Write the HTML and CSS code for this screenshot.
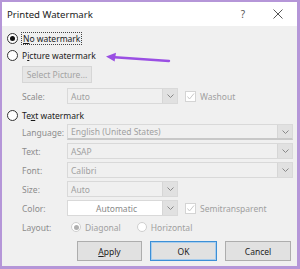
FILE: index.html
```html
<!DOCTYPE html>
<html>
<head>
<meta charset="utf-8">
<link rel="stylesheet" href="styles.css">
</head>
<body>
<div class="dialog">
  <div class="titlebar">
    <span class="title">Printed Watermark</span>
    <span class="help">?</span>
    <svg class="close" width="10" height="10" viewBox="0 0 10 10"><path d="M0.5 0.5 L9.5 9.5 M9.5 0.5 L0.5 9.5" stroke="#555" stroke-width="1"/></svg>
  </div>
  <div class="content">
    <div class="row opt first">
      <span class="radio checked"></span>
      <span class="focus">No watermark</span>
    </div>
    <div class="row opt">
      <span class="radio"></span>
      <span class="optlabel">P<u>i</u>cture watermark</span>
    </div>
    <div class="row btnrow">
      <span class="selbtn">Select Picture...</span>
    </div>
    <div class="row field scale">
      <span class="lbl">Scale:</span>
      <span class="combo short"><span class="val">Auto</span><span class="drop"><svg width="7" height="4" viewBox="0 0 7 4"><path d="M0.5 0.5 L3.5 3.5 L6.5 0.5" fill="none" stroke="#888" stroke-width="1"/></svg></span></span>
      <span class="check"><svg width="9" height="9" viewBox="0 0 9 9"><path d="M1.5 4.5 L3.5 7 L8 1.5" fill="none" stroke="#c8c8c8" stroke-width="1"/></svg></span>
      <span class="checklbl">Washout</span>
    </div>
    <div class="row opt textwm">
      <span class="radio"></span>
      <span class="optlabel">Te<u>x</u>t watermark</span>
    </div>
    <div class="row field lang">
      <span class="lbl">Language:</span>
      <span class="combo long shadow"><span class="val">English (United States)</span><span class="drop"><svg width="7" height="4" viewBox="0 0 7 4"><path d="M0.5 0.5 L3.5 3.5 L6.5 0.5" fill="none" stroke="#888" stroke-width="1"/></svg></span></span>
    </div>
    <div class="row field">
      <span class="lbl">Text:</span>
      <span class="combo long"><span class="val">ASAP</span><span class="drop"><svg width="7" height="4" viewBox="0 0 7 4"><path d="M0.5 0.5 L3.5 3.5 L6.5 0.5" fill="none" stroke="#888" stroke-width="1"/></svg></span></span>
    </div>
    <div class="row field">
      <span class="lbl">Font:</span>
      <span class="combo long"><span class="val">Calibri</span><span class="drop"><svg width="7" height="4" viewBox="0 0 7 4"><path d="M0.5 0.5 L3.5 3.5 L6.5 0.5" fill="none" stroke="#888" stroke-width="1"/></svg></span></span>
    </div>
    <div class="row field">
      <span class="lbl">Size:</span>
      <span class="combo short"><span class="val">Auto</span><span class="drop"><svg width="7" height="4" viewBox="0 0 7 4"><path d="M0.5 0.5 L3.5 3.5 L6.5 0.5" fill="none" stroke="#888" stroke-width="1"/></svg></span></span>
    </div>
    <div class="row field">
      <span class="lbl">Color:</span>
      <span class="combo short white"><span class="val center">Automatic</span><span class="drop"><svg width="7" height="4" viewBox="0 0 7 4"><path d="M0.5 0.5 L3.5 3.5 L6.5 0.5" fill="none" stroke="#888" stroke-width="1"/></svg></span></span>
      <span class="check"><svg width="9" height="9" viewBox="0 0 9 9"><path d="M1.5 4.5 L3.5 7 L8 1.5" fill="none" stroke="#c8c8c8" stroke-width="1"/></svg></span>
      <span class="checklbl">Semitransparent</span>
    </div>
    <div class="row field layout">
      <span class="lbl">Layout:</span>
      <span class="radio dis checked"></span>
      <span class="dislbl diag">Diagonal</span>
      <span class="radio dis"></span>
      <span class="dislbl">Horizontal</span>
    </div>
    <div class="buttons">
      <span class="btn apply"><u>A</u>pply</span>
      <span class="btn ok">OK</span>
      <span class="btn">Cancel</span>
    </div>
  </div>
  <svg class="arrow" width="70" height="14" viewBox="0 0 70 14"><path d="M6 5 L64 9" stroke="#9a4fe3" stroke-width="2.4" stroke-linecap="round" fill="none"/><path d="M1 4.6 L11 0.8 L9.6 9.6 Z" fill="#9a4fe3"/></svg>
</div>
</body>
</html>
```
FILE: styles.css
```css
* { box-sizing: border-box; }
html, body { margin: 0; padding: 0; }
body {
  width: 300px;
  height: 269px;
  background: #b596d8;
  font-family: "Noto Sans", "Open Sans", sans-serif;
  font-size: 8.5px;
  color: #1a1a1a;
  padding: 2px 3px 3px 2px;
  overflow: hidden;
}
.dialog {
  position: relative;
  width: 295px;
  height: 264px;
  background: #f0f0f0;
  display: flex;
  flex-direction: column;
}
.titlebar {
  height: 24px;
  background: #ffffff;
  display: flex;
  align-items: center;
  padding-left: 5px;
  padding-right: 14px;
}
.title { font-size: 9.6px; color: #222; flex: 1; padding-top: 1px; }
.help { font-size: 10px; color: #555; margin-right: 28px; }
.close { display: block; }
.content { flex: 1; padding-left: 5px; display: flex; flex-direction: column; }
.row { display: flex; align-items: center; height: 16px; }
.opt { margin-top: 1px; }
.first.opt { margin-top: 4px; }
.radio {
  width: 11px; height: 11px; border-radius: 50%;
  border: 1px solid #333; background: #fff;
  display: inline-flex; align-items: center; justify-content: center;
  flex: none;
}
.radio.checked::after {
  content: ""; width: 5px; height: 5px; border-radius: 50%; background: #111;
}
.radio.dis { border-color: #cfcfcf; }
.radio.dis.checked::after { background: #b0b0b0; }
.focus {
  margin-left: 3px; padding: 0 1px; border: 1px dotted #444; line-height: 11px;
}
.focus::first-letter { text-decoration: underline; }
.optlabel { margin-left: 4px; }
.btnrow { margin-top: 3px; height: 17px; padding-left: 15px; }
.selbtn {
  width: 70px; height: 17px; border: 1px solid #d6d6d6; background: #e6e6e6;
  color: #a3a3a3; display: flex; align-items: center; justify-content: center;
}
.field { padding-left: 15px; margin-top: 3px; }
.scale { margin-top: 5px; }
.textwm { margin-top: 3px; }
.lang { margin-top: 1px; }
.lbl { width: 45px; color: #8c8c8c; flex: none; }
.combo {
  height: 16px; border: 1px solid #d9d9d9; background: #f0f0f0;
  display: flex; align-items: center; color: #a0a0a0;
}
.combo.short { width: 111px; }
.combo.long { width: 226px; }
.combo.shadow { border-bottom: 2px solid #c8c8c8; }
.combo.white { background: #fff; }
.val { flex: 1; padding-left: 3px; }
.val.center { text-align: center; color: #8a8a8a; }
.drop {
  width: 15px; height: 100%; background: #e1e1e1; border-left: 1px solid #d6d6d6;
  display: flex; align-items: center; justify-content: center;
}
.drop svg { display: block; }
.check {
  width: 11px; height: 11px; border: 1px solid #d4d4d4; background: #fff;
  margin-left: 7px; display: flex; align-items: center; justify-content: center;
}
.checklbl { margin-left: 4px; color: #a0a0a0; }
.layout { margin-top: 3px; }
.layout .radio { width: 10px; height: 10px; margin-left: 0; }
.dislbl { margin-left: 4px; color: #a0a0a0; }
.dislbl.diag { margin-right: 16px; }
.layout .lbl { width: 49px; }
.buttons { display: flex; margin-top: 6px; padding-left: 70px; gap: 8px; }
.btn {
  width: 66px; height: 20px; border: 1px solid #adadad; background: #e1e1e1;
  display: flex; align-items: center; justify-content: center; color: #222;
}
.btn.ok { border: 1px solid #3c8fd6; box-shadow: inset 0 0 0 1px #a9cdec; width: 67px; }
.btn.apply { width: 65px; }
.arrow { position: absolute; left: 103px; top: 50px; }
```
